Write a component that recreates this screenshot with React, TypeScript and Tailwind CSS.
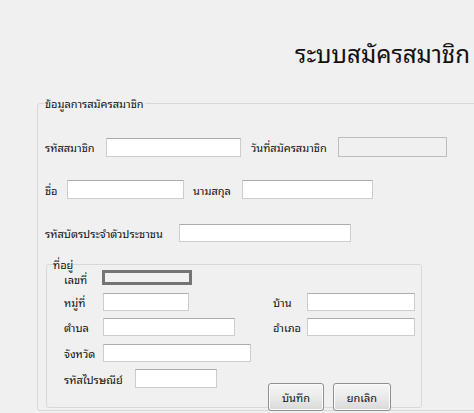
import React from "react";

const font = {
  fontFamily:
    'Tahoma, "Noto Sans Thai Looped", Loma, Garuda, Kinnari, "Noto Sans Thai", "Noto Sans", "DejaVu Sans", sans-serif',
};

const Box = ({ w, h = 19 }: { w: number; h?: number }) => (
  <div
    className="bg-white border border-[#cdcdcd] border-t-[#acacac] shrink-0"
    style={{ width: w, height: h }}
  />
);

const Label = ({ w, children, className = "" }: { w: number; children: React.ReactNode; className?: string }) => (
  <div className={`shrink-0 text-[11px] leading-[14px] text-[#111] ${className}`} style={{ width: w }}>
    {children}
  </div>
);

const Btn = ({ w, children }: { w: number; children: React.ReactNode }) => (
  <div
    className="relative h-[28px] shrink-0 flex items-center justify-center rounded-[3px] border border-[#8f8f8f] bg-gradient-to-b from-[#f6f6f6] via-[#eaeaea] to-[#d9d9d9] text-[11px] text-[#111] shadow-[inset_0_0_0_1px_#fcfcfc]"
    style={{ width: w }}
  >
    {children}
  </div>
);

export default function App() {
  return (
    <div className="w-[474px] h-[413px] overflow-hidden bg-[#f0f0f0]" style={font}>
      <div className="flex justify-end pr-[4px] pt-[36px] h-[96px]">
        <div className="text-[24px] leading-[32px] text-[#111]">ระบบสมัครสมาชิก</div>
      </div>
      <fieldset className="ml-[37px] w-[460px] border border-[#d8d8d8] rounded-[3px] pl-[7px] pr-0 pb-[2px]">
        <legend className="ml-[-1px] px-[1px] text-[11px] leading-[14px] text-[#111]">ข้อมูลการสมัครสมาชิก</legend>

        <div className="flex items-center mt-[27px]">
          <Label w={61}>รหัสสมาชิก</Label>
          <Box w={135} />
          <Label w={87} className="ml-[10px]">วันที่สมัครสมาชิก</Label>
          <div className="w-[109px] h-[20px] border border-[#bdbdbd] bg-[#f0f0f0] shrink-0" />
        </div>

        <div className="flex items-center mt-[23px]">
          <Label w={22}>ชื่อ</Label>
          <Box w={117} />
          <Label w={49} className="ml-[9px]">นามสกุล</Label>
          <Box w={131} />
        </div>

        <div className="flex items-center mt-[25px]">
          <Label w={134}>รหัสบัตรประจำตัวประชาชน</Label>
          <Box w={172} h={18} />
        </div>

        <fieldset className="mt-[17px] ml-[1px] w-[376px] border border-[#d8d8d8] rounded-[3px] pl-[17px] pr-0 pb-0 mb-0">
          <legend className="ml-[-11px] px-0 text-[11px] leading-[11px] text-[#111]">ที่อยู่</legend>

          <div className="flex items-center mt-[-2px]">
            <Label w={38} className="pt-[4px] leading-[12px]">เลขที่</Label>
            <div className="w-[90px] h-[15px] border-[3px] border-[#747474] bg-[#f0f0f0] shrink-0" />
          </div>

          <div className="flex items-center mt-[7px]">
            <Label w={39}>หมู่ที่</Label>
            <Box w={86} h={18} />
            <Label w={34} className="ml-[84px]">บ้าน</Label>
            <Box w={108} h={18} />
          </div>

          <div className="flex items-center mt-[7px]">
            <Label w={39}>ตำบล</Label>
            <Box w={132} h={18} />
            <Label w={34} className="ml-[38px]">อำเภอ</Label>
            <Box w={108} h={18} />
          </div>

          <div className="flex items-center mt-[8px]">
            <Label w={39}>จังหวัด</Label>
            <Box w={148} h={18} />
          </div>

          <div className="flex items-start mt-[7px] h-[38px]">
            <div className="flex items-center h-[19px]">
              <Label w={71}>รหัสไปรษณีย์</Label>
              <Box w={82} />
            </div>
            <div className="flex gap-[9px] ml-[51px] mt-[14px]">
              <Btn w={56}>บันทึก</Btn>
              <Btn w={58}>ยกเลิก</Btn>
            </div>
          </div>
        </fieldset>
      </fieldset>
    </div>
  );
}
